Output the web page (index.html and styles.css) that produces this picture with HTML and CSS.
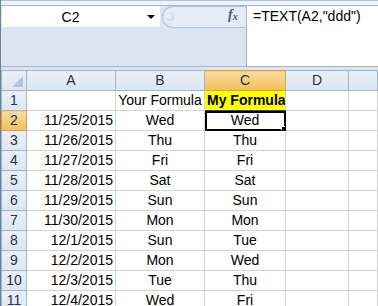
FILE: index.html
```html
<!DOCTYPE html>
<html lang="en">
<head>
    <meta charset="UTF-8">
    <title>TEXT ddd</title>
    <link rel="stylesheet" href="styles.css">
</head>
<body>
    <div class="top-strip"></div>

    <!-- name box + formula bar -->
    <div class="formula-bar">
        <div class="left-part">
            <div class="name-box">
                <span class="cell-ref">C2</span>
                <span class="arrow"></span>
            </div>
            <div class="splitter">
                <span class="knob"></span>
                <span class="fx">f<sub>x</sub></span>
            </div>
        </div>
        <div class="formula-text">=TEXT(A2,"ddd")</div>
    </div>

    <table class="sheet">
        <colgroup>
            <col class="c-head">
            <col class="c-a">
            <col class="c-b">
            <col class="c-c">
            <col class="c-d">
            <col>
        </colgroup>
        <tr class="col-heads">
            <th class="corner"><span class="tri"></span></th>
            <th>A</th>
            <th>B</th>
            <th class="sel">C</th>
            <th>D</th>
            <th></th>
        </tr>
        <tr>
            <th class="row-head">1</th>
            <td></td>
            <td class="center">Your Formula</td>
            <td class="center mine">My Formula</td>
            <td></td><td></td>
        </tr>
        <tr>
            <th class="row-head sel">2</th>
            <td class="num">11/25/2015</td>
            <td class="center">Wed</td>
            <td class="center active">Wed<span class="handle"></span></td>
            <td></td><td></td>
        </tr>
        <tr>
            <th class="row-head">3</th>
            <td class="num">11/26/2015</td>
            <td class="center">Thu</td>
            <td class="center">Thu</td>
            <td></td><td></td>
        </tr>
        <tr>
            <th class="row-head">4</th>
            <td class="num">11/27/2015</td>
            <td class="center">Fri</td>
            <td class="center">Fri</td>
            <td></td><td></td>
        </tr>
        <tr>
            <th class="row-head">5</th>
            <td class="num">11/28/2015</td>
            <td class="center">Sat</td>
            <td class="center">Sat</td>
            <td></td><td></td>
        </tr>
        <tr>
            <th class="row-head">6</th>
            <td class="num">11/29/2015</td>
            <td class="center">Sun</td>
            <td class="center">Sun</td>
            <td></td><td></td>
        </tr>
        <tr>
            <th class="row-head">7</th>
            <td class="num">11/30/2015</td>
            <td class="center">Mon</td>
            <td class="center">Mon</td>
            <td></td><td></td>
        </tr>
        <tr>
            <th class="row-head">8</th>
            <td class="num">12/1/2015</td>
            <td class="center">Sun</td>
            <td class="center">Tue</td>
            <td></td><td></td>
        </tr>
        <tr>
            <th class="row-head">9</th>
            <td class="num">12/2/2015</td>
            <td class="center">Mon</td>
            <td class="center">Wed</td>
            <td></td><td></td>
        </tr>
        <tr>
            <th class="row-head">10</th>
            <td class="num">12/3/2015</td>
            <td class="center">Tue</td>
            <td class="center">Thu</td>
            <td></td><td></td>
        </tr>
        <tr>
            <th class="row-head">11</th>
            <td class="num">12/4/2015</td>
            <td class="center">Wed</td>
            <td class="center">Fri</td>
            <td></td><td></td>
        </tr>
    </table>
</body>
</html>
```

FILE: styles.css
```css
body {
    margin: 0;
    width: 378px;
    height: 306px;
    overflow: hidden;
    background: #dbe5f1;
    font-family: 'Liberation Sans', Arial, sans-serif;
    font-size: 14px;
    color: #000;
    border-left: 1px solid #6f8197;
    box-sizing: border-box;
}

.top-strip {
    height: 4px;
    border-top: 1px solid #b4c2d4;
    background: #eef2f8;
    border-bottom: 1px solid #a7b7cb;
}

.formula-bar {
    display: flex;
    height: 60px;
    border-bottom: 1px solid #a7b7cb;
}

.left-part {
    width: 244px;
    display: flex;
    align-items: flex-start;
    padding-left: 1px;
}

.name-box {
    width: 158px;
    height: 21px;
    background: #fff;
    display: flex;
    align-items: center;
}

.cell-ref {
    flex: 1;
    text-align: center;
    padding-right: 8px;
}

.arrow {
    width: 0;
    height: 0;
    border-left: 4px solid transparent;
    border-right: 4px solid transparent;
    border-top: 4px solid #000;
    margin-right: 5px;
}

.splitter {
    flex: 1;
    height: 20px;
    margin-left: 2px;
    display: flex;
    align-items: center;
    border: 1px solid #b3c1d3;
    border-right: none;
    border-radius: 11px 0 0 11px;
    background: #e4ebf5;
}

.knob {
    width: 8px;
    height: 8px;
    margin-left: 3px;
    border-radius: 50%;
    background: radial-gradient(circle at 3px 3px, #f4f7fb 0, #c3cfdf 6px);
}

.fx {
    margin-left: 54px;
    margin-top: -4px;
    font-family: 'Liberation Serif', 'Times New Roman', serif;
    font-style: italic;
    font-weight: bold;
    font-size: 14px;
    color: #4f5864;
}

.fx sub {
    font-size: 10px;
    vertical-align: -1px;
}

.formula-text {
    flex: 1;
    background: #fff;
    border-left: 1px solid #a7b7cb;
    padding: 2px 0 0 6px;
    height: 58px;
}

.sheet {
    margin-top: 3px;
    border-collapse: collapse;
    table-layout: fixed;
    width: 377px;
    background: #fff;
}

.c-head { width: 25px; }
.c-a { width: 89px; }
.c-b { width: 89px; }
.c-c { width: 81px; }
.c-d { width: 63px; }

.sheet tr {
    height: 20px;
}

.sheet td {
    border: 1px solid #d4d4d4;
    padding: 0 2px;
    white-space: nowrap;
    overflow: hidden;
    line-height: 19px;
}

.sheet th {
    font-weight: normal;
    color: #27334a;
    background: linear-gradient(#eaf0f8, #dce6f2);
    border: 1px solid #9eb6ce;
    padding: 0;
    line-height: 19px;
}

.col-heads th {
    text-align: center;
}

.corner {
    position: relative;
}

.tri {
    position: absolute;
    right: 3px;
    bottom: 3px;
    width: 0;
    height: 0;
    border-left: 11px solid transparent;
    border-bottom: 11px solid #b6c4d8;
}

.row-head {
    text-align: center;
}

.sheet th.sel {
    background: linear-gradient(#f9dc9c, #f1c15f);
    border-color: #e59b3e;
}

.num {
    text-align: right;
}

.center {
    text-align: center;
}

.mine {
    background: #ffff00;
    font-weight: bold;
    border-bottom: 1px solid #1f3fe0 !important;
}

.active {
    position: relative;
    outline: 2px solid #000;
    outline-offset: -2px;
}

.handle {
    position: absolute;
    right: -3px;
    bottom: -3px;
    width: 5px;
    height: 5px;
    background: #000;
    border: 1px solid #fff;
    z-index: 1;
}
```
